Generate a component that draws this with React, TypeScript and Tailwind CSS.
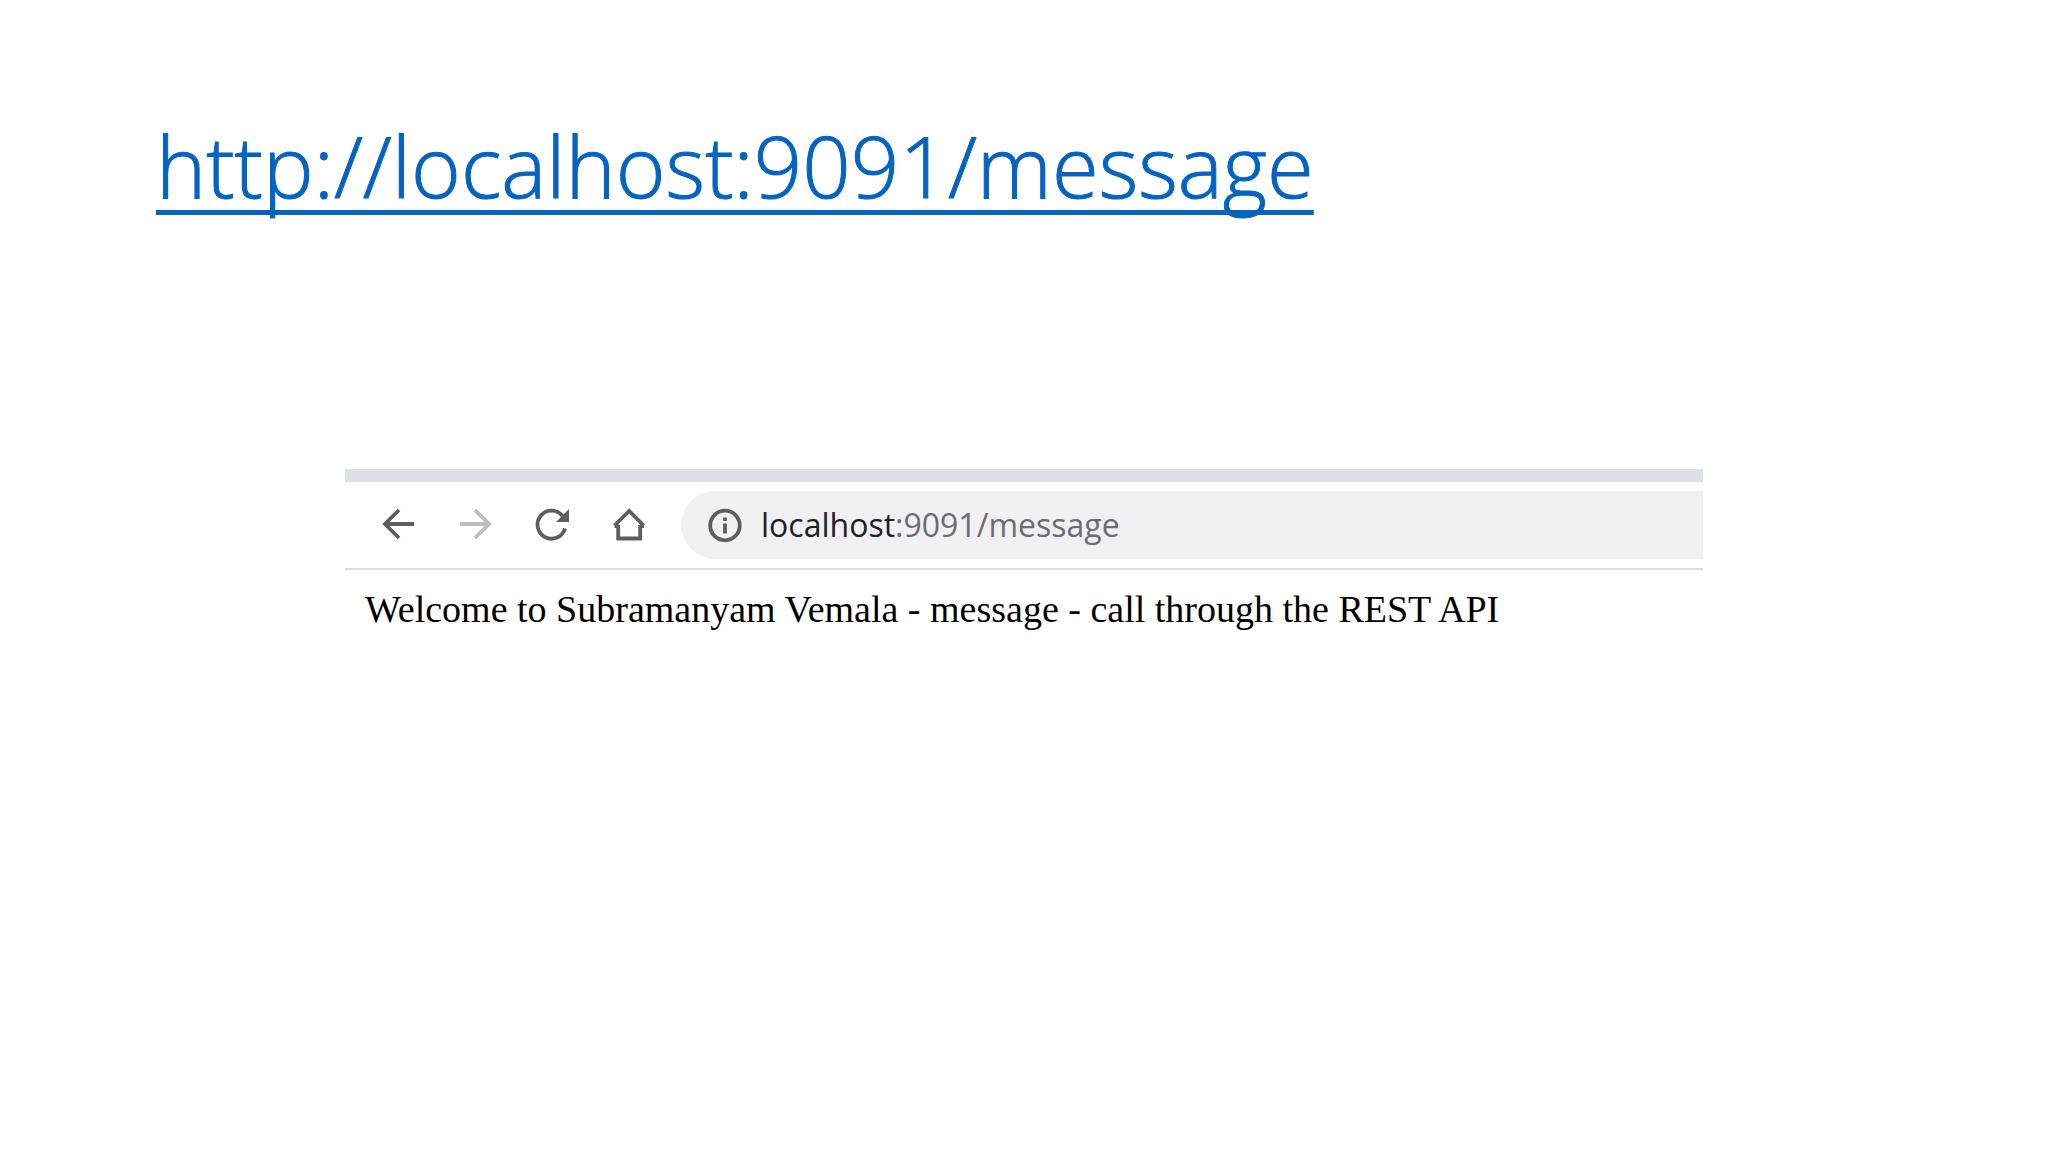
import React from 'react';

interface IconButtonProps {
  label: string;
  disabled?: boolean;
  children: React.ReactNode;
}

const IconButton: React.FC<IconButtonProps> = ({ label, disabled = false, children }) => (
  <button
    type="button"
    aria-label={label}
    disabled={disabled}
    className="shrink-0 text-[#5b5e62] disabled:text-[#bcbdbf]"
  >
    <svg
      viewBox="0 0 32 32"
      className="size-8 overflow-visible"
      fill="none"
      stroke="currentColor"
      strokeWidth="3.8"
      aria-hidden="true"
    >
      {children}
    </svg>
  </button>
);

const Toolbar: React.FC = () => (
  <nav className="flex items-center border-b-2 border-[#dcdddf] py-[9px] pl-[37px]">
    <div className="flex gap-[45px]">
      <IconButton label="Back">
        <path d="M32 15H3M17 1L3 15l14 14" />
      </IconButton>
      <IconButton label="Forward" disabled>
        <path d="M1 15h29M16 1l14 14-14 14" />
      </IconButton>
      <IconButton label="Reload">
        <path d="M29 19.5A14 14 0 1 1 26.5 7" />
        <path d="M33 0v13H20z" fill="currentColor" stroke="none" />
      </IconButton>
      <IconButton label="Home">
        <path d="M5.2 16v13.5h22V16M1.5 17h4M27 17h4M1.5 16.5L16.2 2l14.5 14.5" />
      </IconButton>
    </div>
    <div className="ml-9 flex h-17 flex-1 items-center rounded-l-full bg-[#f1f1f4] pl-7">
      <IconButton label="Site information">
        <circle cx="16" cy="16.5" r="14.8" />
        <path d="M16 14.5v10M16 8.5v3.6" />
      </IconButton>
      <a
        href="http://localhost:9091/message"
        className="ml-5 font-['Open_Sans',sans-serif] text-[32px] text-[#6a6d71]"
      >
        <span className="text-[#202124]">localhost</span>:9091/message
      </a>
    </div>
  </nav>
);

export default function App() {
  return (
    <main className="min-h-screen bg-white pt-[105px]">
      <h1 className="px-[156px] font-['Open_Sans',sans-serif] text-[85px] leading-[120px] font-light">
        <a
          href="http://localhost:9091/message"
          className="text-[#0563c1] underline decoration-[5px] underline-offset-[12px] [-webkit-text-stroke:1px_#0563c1] [text-decoration-skip-ink:none]"
        >
          http://localhost:9091/message
        </a>
      </h1>
      <section className="mx-[345px] mt-[244px] border-t-[13px] border-[#dee1e6]">
        <Toolbar />
        <p className="px-5 pt-[17px] font-['Liberation_Serif',serif] text-[38px] leading-[44px] text-black">
          Welcome to Subramanyam Vemala - message - call through the REST API
        </p>
      </section>
    </main>
  );
}
